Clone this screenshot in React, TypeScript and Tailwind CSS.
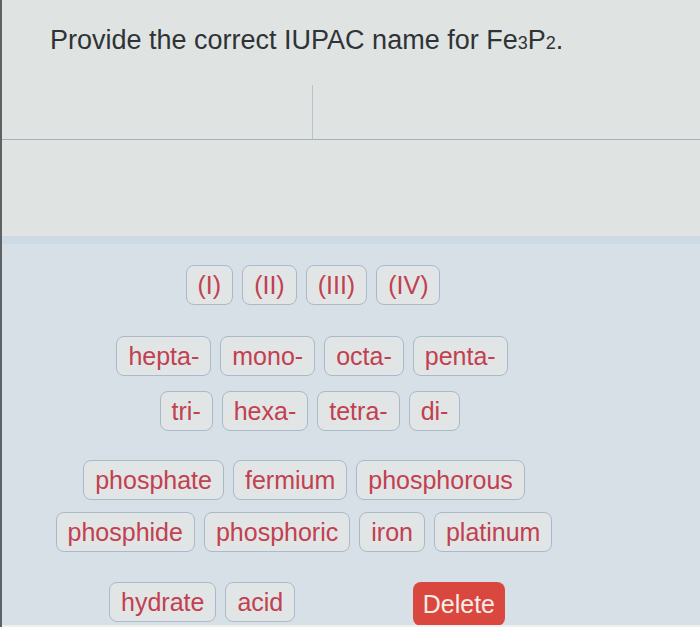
import React from "react";

const Chip = ({ label }: { label: string }) => (
  <div className="h-[40px] flex items-center px-[11px] rounded-[8px] border border-[#a9bac8] bg-[#e1e5e5] text-[25px] leading-none text-[#c2404f] whitespace-nowrap">
    {label}
  </div>
);

const Row = ({ items, className }: { items: string[]; className?: string }) => (
  <div className={"flex justify-center gap-[9px] " + (className ?? "")}>
    {items.map((t) => (
      <Chip key={t} label={t} />
    ))}
  </div>
);

export default function App() {
  return (
    <div
      className="w-[700px] h-[627px] overflow-hidden border-l-2 border-[#5f6264] flex flex-col"
      style={{ fontFamily: '"Liberation Sans", Arial, sans-serif' }}
    >
      <div className="h-[236px] shrink-0 bg-[#dfe4e3] flex flex-col">
        <div className="h-[85px] pl-[48px] pt-[27px] text-[27px] leading-none text-[#2f3335]">
          Provide the correct IUPAC name for Fe
          <span className="text-[18px]">3</span>P
          <span className="text-[18px]">2</span>.
        </div>
        <div className="h-[55px] flex border-b border-[#a3b2c0]">
          <div className="w-[311px] border-r border-[#b7c4cf]" />
        </div>
      </div>
      <div className="flex-1 bg-[#d6e0e6] relative">
        <div className="h-[8px] bg-[#cdd9e4]" />
        <div className="w-[616px] pt-[21px] flex flex-col">
          <Row items={["(I)", "(II)", "(III)", "(IV)"]} className="pl-[6px]" />
          <Row items={["hepta-", "mono-", "octa-", "penta-"]} className="mt-[31px] pl-[4px]" />
          <Row items={["tri-", "hexa-", "tetra-", "di-"]} className="mt-[15px]" />
          <Row items={["phosphate", "fermium", "phosphorous"]} className="mt-[29px] pr-[12px]" />
          <Row items={["phosphide", "phosphoric", "iron", "platinum"]} className="mt-[12px] pr-[12px]" />
          <div className="mt-[30px] ml-[107px] w-[396px] flex gap-[9px]">
            <Chip label="hydrate" />
            <Chip label="acid" />
            <div className="ml-auto h-[44px] flex items-center px-[10px] rounded-[8px] bg-[#d9473f] text-[25px] leading-none text-[#f7ebe8]">
              Delete
            </div>
          </div>
        </div>
        <div className="absolute left-0 right-0 bottom-0 h-[2px] bg-[#eef0f0]" />
      </div>
    </div>
  );
}
